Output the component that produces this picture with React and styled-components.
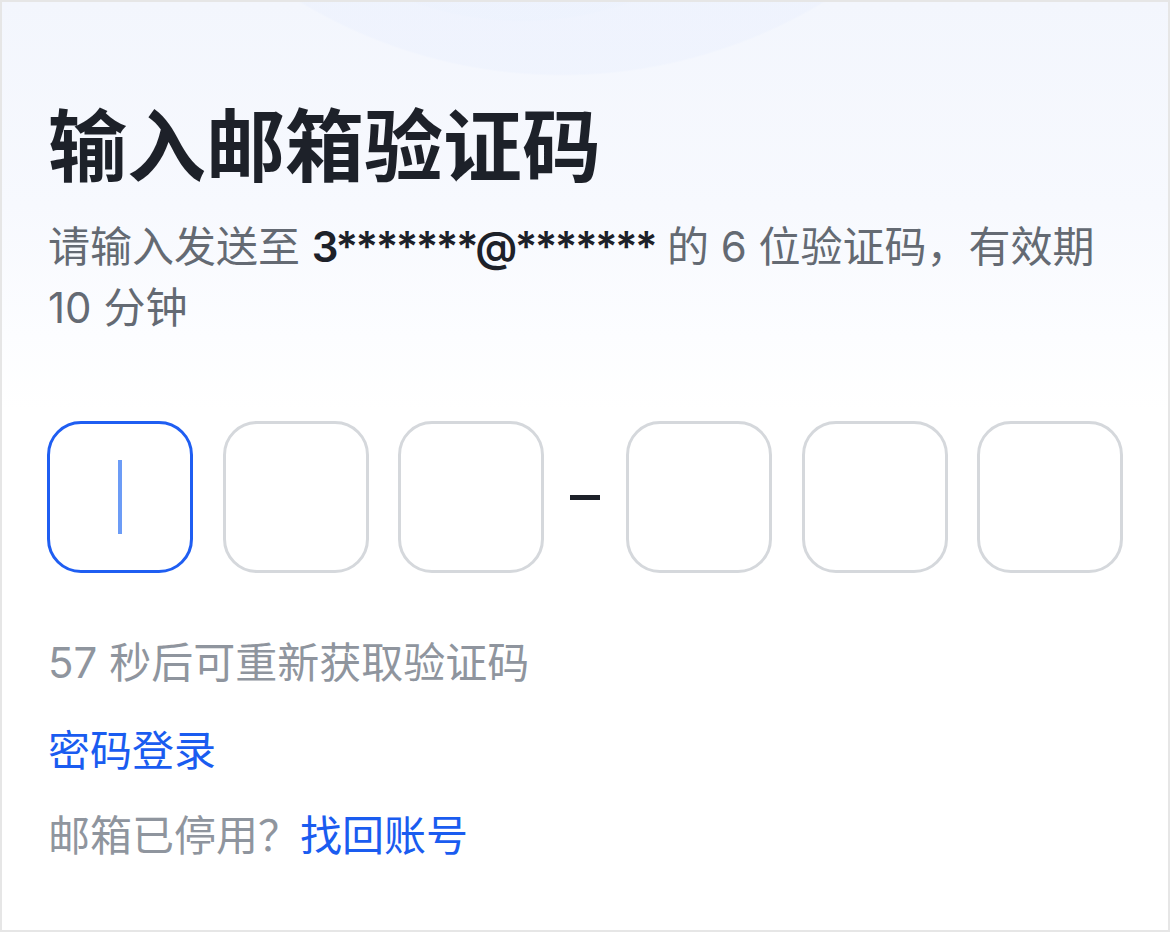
import * as React from "react";
import styled, { createGlobalStyle } from "styled-components";

const GlobalStyle = createGlobalStyle`
  html, body {
    margin: 0;
    padding: 0;
    background: #ffffff;
  }
  body {
    font-family: "Inter", "Noto Sans CJK SC", sans-serif;
  }
`;

const CODE_LENGTH = 6;

const App = () => {
  const [code] = React.useState("");
  const [seconds] = React.useState(57);

  const renderCell = (index) => (
    <Cell key={index} $active={index === code.length}>
      {code[index] || (index === code.length ? <Caret /> : null)}
    </Cell>
  );

  return (
    <Page>
      <GlobalStyle />
      <Title>输入邮箱验证码</Title>
      <Subtitle>
        请输入发送至 <Email>3*******@*******</Email> 的 6 位验证码，有效期 10 分钟
      </Subtitle>

      <CodeRow>
        {Array.from({ length: CODE_LENGTH / 2 }, (_, i) => renderCell(i))}
        <Dash />
        {Array.from({ length: CODE_LENGTH / 2 }, (_, i) =>
          renderCell(i + CODE_LENGTH / 2)
        )}
      </CodeRow>

      <Countdown>{seconds} 秒后可重新获取验证码</Countdown>
      <LinkLine>
        <Link href="#">密码登录</Link>
      </LinkLine>
      <HelpLine>
        <Question>邮箱已停用？</Question>
        <Link href="#">找回账号</Link>
      </HelpLine>
    </Page>
  );
};

export default App;

const Page = styled.div`
  box-sizing: border-box;
  width: 1170px;
  height: 932px;
  border: 2px solid #e6e6e6;
  padding: 91px 46px 0;
  overflow: hidden;
  background:
    radial-gradient(circle at 560px -433px, rgba(228, 236, 254, 0.28) 0 505px, transparent 507px),
    radial-gradient(circle at 520px -300px, rgba(236, 242, 254, 0.26) 0 318px, transparent 320px),
    linear-gradient(180deg, #f3f6fd 0%, #f7f9fe 22%, #fcfdff 36%, #ffffff 44%, #ffffff 100%);
`;

const Title = styled.h1`
  margin: 0;
  font-size: 79px;
  line-height: 108px;
  font-weight: 700;
  color: #1d2129;
`;

const Subtitle = styled.p`
  margin: 15px 0 0;
  font-size: 42px;
  line-height: 61px;
  color: #646a73;
`;

const Email = styled.span`
  font-weight: 600;
  letter-spacing: -2.6px;
  color: #1d2129;
`;

const CodeRow = styled.div`
  display: flex;
  align-items: center;
  gap: 29.5px;
  margin: 83px 0 0 -1px;
`;

const Cell = styled.div`
  box-sizing: border-box;
  flex: 0 0 146px;
  height: 152px;
  border: 3px solid ${(p) => (p.$active ? "#1f5ef2" : "#d5d8dc")};
  border-radius: 34px;
  background: #ffffff;
  display: flex;
  align-items: center;
  justify-content: center;
  font-size: 64px;
  color: #1d2129;
`;

const Caret = styled.span`
  display: block;
  width: 4px;
  height: 74px;
  background: #6c9cf6;
`;

const Dash = styled.span`
  display: block;
  flex: 0 0 30px;
  height: 5px;
  margin: 0 -3.5px;
  background: #1d2129;
`;

const Countdown = styled.p`
  margin: 60px 0 0;
  font-size: 42px;
  line-height: 60px;
  color: #8f959e;
`;

const LinkLine = styled.p`
  margin: 28px 0 0;
  font-size: 42px;
  line-height: 60px;
`;

const HelpLine = styled.p`
  margin: 22px 0 0;
  font-size: 42px;
  line-height: 60px;
  color: #8f959e;
`;

const Question = styled.span`
  font-family: "Noto Sans CJK SC", sans-serif;
`;

const Link = styled.a`
  color: #1a5cf0;
  text-decoration: none;
`;
